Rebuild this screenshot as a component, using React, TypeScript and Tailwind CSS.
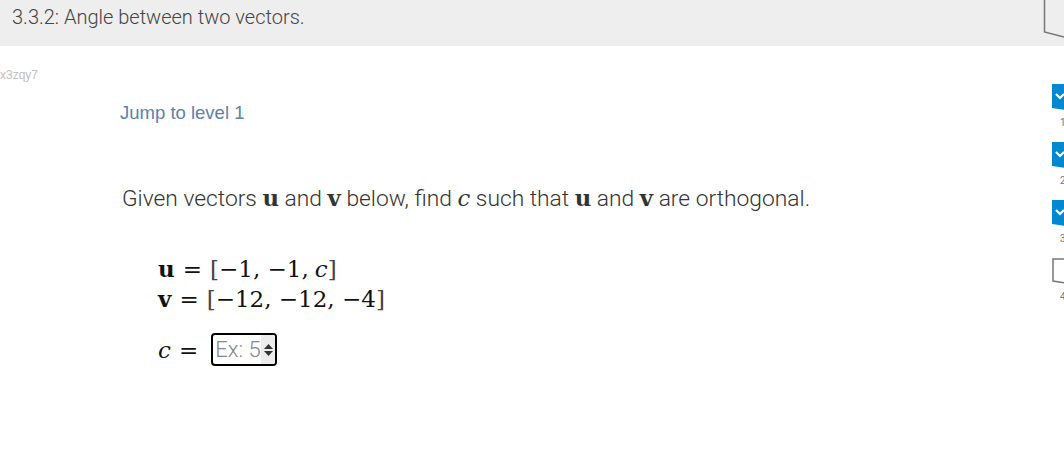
import React from "react";

const math = { fontFamily: '"DejaVu Serif", "Liberation Serif", serif' };

function LevelBox({ done, label }: { done: boolean; label: string }) {
  return (
    <div className="flex flex-col items-start">
      <svg width="20" height="27" viewBox="0 0 20 27">
        {done ? (
          <>
            <polygon points="0,0 20,0 20,27 0,24" fill="#0288d1" />
            <polyline points="4,10 8,14 12,10" fill="none" stroke="#ffffff" strokeWidth="2.2" />
          </>
        ) : (
          <polygon points="1,1 20,1 20,26 1,23" fill="#ffffff" stroke="#777" strokeWidth="1.5" />
        )}
      </svg>
      <div className="mt-[6px] pl-[8px] text-[10px] leading-[12px] text-[#777]" style={{ fontFamily: '"Roboto", sans-serif' }}>
        {label}
      </div>
    </div>
  );
}

function Eq() {
  return <span className="mx-[8px]">=</span>;
}

export default function App() {
  return (
    <div className="relative w-[1064px] h-[468px] overflow-hidden bg-white" style={{ fontFamily: '"Roboto", "Liberation Sans", sans-serif' }}>
      <div className="h-[46px] bg-[#eeeeee] pl-[12px] pt-[3px]">
        <div className="text-[20px] font-light text-[#444] leading-[28px]">3.3.2: Angle between two vectors.</div>
      </div>
      <svg className="absolute left-[1040px] top-0" width="24" height="46" viewBox="0 0 24 46">
        <polyline points="4.5,0 4.5,32 24,37" fill="none" stroke="#777" strokeWidth="1.5" />
      </svg>

      <div className="absolute left-[1052px] top-[84px] flex flex-col gap-[13px]">
        <LevelBox done label="1" />
        <LevelBox done label="2" />
        <LevelBox done label="3" />
        <LevelBox done={false} label="4" />
      </div>

      <div className="pt-[22px]">
        <div className="text-[12px] leading-[14px] text-[#c0c0c0]" style={{ fontFamily: '"Liberation Sans", sans-serif' }}>x3zqy7</div>
        <div className="pl-[120px] mt-[20px] text-[18.5px] leading-[22px] text-[#5a82ad]" style={{ fontFamily: '"Liberation Sans", sans-serif' }}>
          Jump to level 1
        </div>
        <div className="pl-[122px] mt-[59px] text-[22.8px] font-light leading-[30px] text-[#333]">
          Given vectors <b className="font-bold" style={math}>u</b> and <b className="font-bold" style={math}>v</b> below, find{" "}
          <i style={math}>c</i> such that <b className="font-bold" style={math}>u</b> and <b className="font-bold" style={math}>v</b> are orthogonal.
        </div>
        <div className="pl-[158px] mt-[40px] text-[23px] leading-[30px] text-[#111]" style={math}>
          <div className="flex items-center">
            <b>u</b>
            <Eq />
            <span className="text-[#444]">[</span>−1, −1, <i className="ml-[6px]">c</i>
            <span className="text-[#444]">]</span>
          </div>
          <div className="flex items-center whitespace-pre">
            <b>v</b>
            <Eq />
            <span className="text-[#444]">[</span>−12, −12, −4<span className="text-[#444]">]</span>
          </div>
          <div className="mt-[19px] flex items-center">
            <i>c</i>
            <Eq />
            <div className="ml-[5px] flex items-center h-[33px] w-[66px] border-2 border-black rounded-[4px] overflow-hidden">
              <span className="pl-[2px] text-[22px] font-light text-[#888] whitespace-nowrap" style={{ fontFamily: '"Roboto", sans-serif' }}>Ex: 5</span>
              <span className="ml-auto shrink-0 h-full w-[15px] bg-[#ececec] flex flex-col items-center justify-center gap-[2px]">
                <svg width="9" height="5" viewBox="0 0 9 5"><polygon points="0,5 4.5,0 9,5" fill="#333" /></svg>
                <svg width="9" height="5" viewBox="0 0 9 5"><polygon points="0,0 4.5,5 9,0" fill="#333" /></svg>
              </span>
            </div>
          </div>
        </div>
      </div>
    </div>
  );
}
